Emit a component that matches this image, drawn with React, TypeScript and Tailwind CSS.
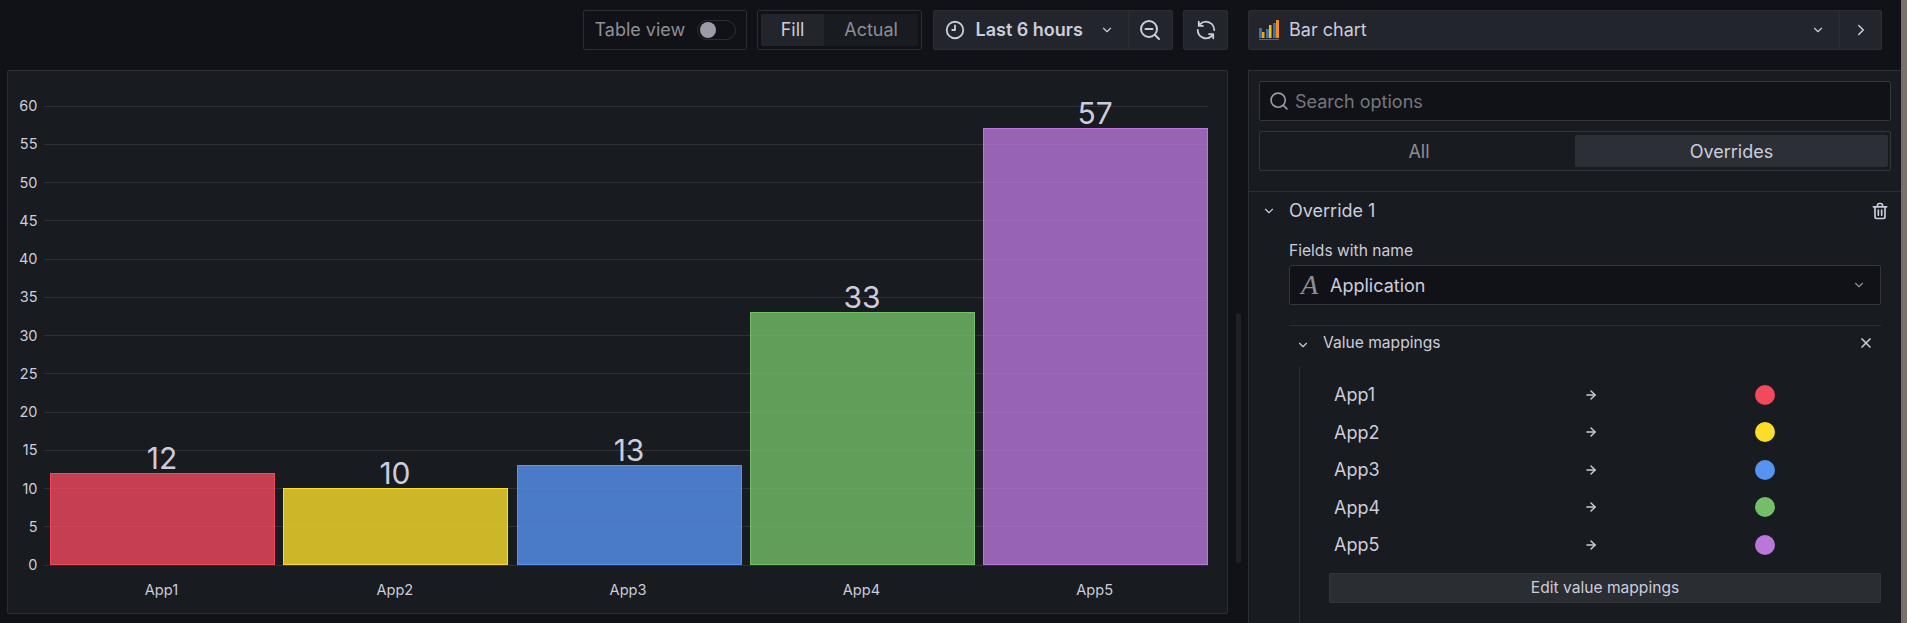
// Bar chart panel editor
import { ArrowRight, ChevronDown, ChevronRight, X } from "lucide-react";

const ticks = [0, 5, 10, 15, 20, 25, 30, 35, 40, 45, 50, 55, 60];

const bars = [
    { name: "App1", value: 12, color: "#f2495c", x: 50.5 },
    { name: "App2", value: 10, color: "#fade2a", x: 283.5 },
    { name: "App3", value: 13, color: "#5794f2", x: 517.5 },
    { name: "App4", value: 33, color: "#73bf69", x: 750.5 },
    { name: "App5", value: 57, color: "#b877d9", x: 983.5 },
];

const yOf = (v: number) => 565 - v * 7.65;

const Chart = () => (
    <svg width="1219" height="542" viewBox="8 71 1219 542" className="block" fontFamily="Inter, sans-serif">
        {ticks.map((t) => (
            <g key={t}>
                <line x1="44" x2="1208" y1={Math.floor(yOf(t)) + 0.5} y2={Math.floor(yOf(t)) + 0.5} stroke="#ccccdc" strokeOpacity="0.12" />
                <text x="37.5" y={yOf(t) + 5} textAnchor="end" fontSize="14.5" fill="#ccccdc">{t}</text>
            </g>
        ))}
        {bars.map((b, i) => {
            const top = Math.floor(yOf(b.value)) + 0.5;
            return (
                <g key={b.name}>
                    <rect x={b.x} y={top} width="224" height={564.5 - top} fill={b.color} fillOpacity="0.8" stroke={b.color} strokeWidth="1" />
                    <text x={b.x + 111.5} y={top - 5} textAnchor="middle" fontSize="30" fill="#ccccdc">{b.value}</text>
                    <text x={161.5 + i * 233.3} y="595" textAnchor="middle" fontSize="14.6" fill="#ccccdc">{b.name}</text>
                </g>
            );
        })}
    </svg>
);

const Toolbar = () => (
    <div className="flex justify-end gap-[10.5px] h-10 mt-[10px] mb-[20px]">
        <div className="flex items-center w-[164px] border border-[#2c2e33] rounded-[2px] pl-[11px] text-[#8d8e96]">
            <span className="pb-[1px]">Table view</span>
            <span className="flex items-center ml-[12px] w-[39px] h-5 rounded-full border border-[#2c2e33] pl-[2px]">
                <span className="w-4 h-4 rounded-full bg-[#9c9ca8]" />
            </span>
        </div>
        <div className="flex items-stretch w-[165px] border border-[#2c2e33] rounded-[2px] p-[3px]">
            <div className="flex w-full bg-[#181b1f] rounded-[2px]">
                <span className="flex items-center justify-center w-[64px] pb-[1px] bg-[#22252b] rounded-[2px] text-[#ccccdc]">Fill</span>
                <span className="flex items-center justify-center w-[95px] pb-[1px] text-[#8d8e96]">Actual</span>
            </div>
        </div>
        <div className="flex items-center w-[240px] bg-[#22252b] border border-[#2c2e33] rounded-[2px]">
            <svg width="22" height="22" viewBox="0 0 24 24" fill="#ccccdc" className="ml-[10px]">
                <path d="M12,2A10,10,0,1,0,22,12,10,10,0,0,0,12,2Zm0,18a8,8,0,1,1,8-8A8,8,0,0,1,12,20Zm0-14a1,1,0,0,0-1,1v4H9a1,1,0,0,0,0,2h3a1,1,0,0,0,1-1V7A1,1,0,0,0,12,6Z" />
            </svg>
            <span className="ml-[10px] pb-[1px] font-semibold text-[#ccccdc]">Last 6 hours</span>
            <ChevronDown size={14} className="ml-[17px] text-[#ccccdc]" />
            <span className="flex items-center justify-center ml-auto w-[44px] h-full border-l border-[#2c2e33]">
                <svg width="24" height="24" viewBox="0 0 24 24" fill="none" stroke="#ccccdc" strokeWidth="2" strokeLinecap="round">
                    <circle cx="11" cy="11" r="8" />
                    <path d="M7.5 11h7M17 17l4 4" />
                </svg>
            </span>
        </div>
        <div className="flex items-center justify-center w-[45px] bg-[#22252b] border border-[#2c2e33] rounded-[2px]">
            <svg width="22" height="22" viewBox="0 0 24 24" fill="#ccccdc">
                <path d="M19.91,15.51H15.38a1,1,0,0,0,0,2h2.4A8,8,0,0,1,4,12a1,1,0,0,0-2,0,10,10,0,0,0,16.88,7.23V21a1,1,0,0,0,2,0V16.5A1,1,0,0,0,19.91,15.51ZM12,2A10,10,0,0,0,5.12,4.77V3a1,1,0,0,0-2,0V7.5a1,1,0,0,0,1,1h4.5a1,1,0,0,0,0-2H6.22A8,8,0,0,1,20,12a1,1,0,0,0,2,0A10,10,0,0,0,12,2Z" />
            </svg>
        </div>
    </div>
);

const BarChartIcon = () => (
    <svg width="20" height="20" viewBox="0 0 20 20" className="shrink-0">
        <rect x="0" y="8" width="3" height="10" fill="#3f6ea8" />
        <rect x="3" y="12" width="2.5" height="6" fill="#f2a900" />
        <rect x="7" y="9" width="3" height="9" fill="#3f6ea8" />
        <rect x="10" y="5" width="2.5" height="13" fill="#f2c400" />
        <rect x="14" y="3" width="3" height="15" fill="#3f6ea8" />
        <rect x="17" y="0" width="3" height="18" fill="#f28c1e" />
        <rect x="0" y="19" width="20" height="1" fill="#3f6ea8" />
    </svg>
);

const Mapping = ({ name, color }: { name: string; color: string }) => (
    <div className="flex items-center h-[37.5px] pl-[34px]">
        <span className="w-[249px] text-[#ccccdc]">{name}</span>
        <ArrowRight size={14} strokeWidth={2.5} className="text-[#ccccdc] mx-[1px]" />
        <span className="ml-[156px] w-5 h-5 rounded-full" style={{ backgroundColor: color }} />
    </div>
);

const Sidebar = () => (
    <div className="flex flex-col flex-1 min-w-0 ml-[20px]">
        <div className="flex items-center w-[634px] h-10 mt-[10px] mb-[20px] bg-[#22252b] border border-[#2c2e33] rounded-[2px] text-[#ccccdc]">
            <span className="ml-[10px]"><BarChartIcon /></span>
            <span className="ml-[10px] flex-1 pb-[1px]">Bar chart</span>
            <ChevronDown size={14} className="mr-[14px]" />
            <span className="flex items-center justify-center w-[42px] h-full border-l border-[#2c2e33]">
                <ChevronRight size={18} />
            </span>
        </div>

        <div className="flex flex-col flex-1 bg-[#181b1f] border-l border-t border-[#2c2e33]">
            <div className="px-[10px] pt-[10px] pb-[20px] border-b border-[#2c2e33]">
                <div className="flex items-center h-10 bg-[#111217] border border-[#33363b] rounded-[2px] pl-[9px] text-[#75767d]">
                    <svg width="20" height="20" viewBox="0 0 24 24" fill="none" stroke="#9a9aa6" strokeWidth="2" strokeLinecap="round">
                        <circle cx="11" cy="11" r="8.5" />
                        <path d="M17.5 17.5l4 4" />
                    </svg>
                    <span className="ml-[6px] pt-[1px]">Search options</span>
                </div>
                <div className="flex h-10 mt-[10px] border border-[#33363b] rounded-[2px] p-[3px] pr-[2px]">
                    <span className="flex items-center justify-center w-[312px] pt-[1px] text-[#8d8e96]">All</span>
                    <span className="flex items-center justify-center flex-1 pt-[1px] bg-[#2c2f35] rounded-[2px] text-[#ccccdc]">Overrides</span>
                </div>
            </div>

            <div className="flex items-center h-[38px] pl-[13px] pr-[11px] text-[#ccccdc]">
                <ChevronDown size={14} />
                <span className="ml-[13px] flex-1 pb-[1px]">Override 1</span>
                <svg width="20" height="20" viewBox="0 0 24 24" fill="#ccccdc">
                    <path d="M10,18a1,1,0,0,0,1-1V11a1,1,0,0,0-2,0v6A1,1,0,0,0,10,18ZM20,6H16V5a3,3,0,0,0-3-3H11A3,3,0,0,0,8,5V6H4A1,1,0,0,0,4,8H5V19a3,3,0,0,0,3,3h8a3,3,0,0,0,3-3V8h1a1,1,0,0,0,0-2ZM10,5a1,1,0,0,1,1-1h2a1,1,0,0,1,1,1V6H10Zm7,14a1,1,0,0,1-1,1H8a1,1,0,0,1-1-1V8H17Zm-3-1a1,1,0,0,0,1-1V11a1,1,0,0,0-2,0v6A1,1,0,0,0,14,18Z" />
                </svg>
            </div>

            <div className="flex flex-col flex-1 pl-[40px] pr-[20px]">
                <div className="mt-[11px] mb-[4px] h-5 leading-5 text-[15.6px] text-[#ccccdc]">Fields with name</div>
                <div className="flex items-center h-10 bg-[#111217] border border-[#33363b] rounded-[2px] text-[#ccccdc]">
                    <span className="ml-[11px] w-[19px] font-['Liberation_Serif',serif] italic text-[28px] leading-none text-[#8d8e96]">A</span>
                    <span className="ml-[10px] flex-1 pt-[1px]">Application</span>
                    <ChevronDown size={14} className="mr-[14px] text-[#8d8e96]" />
                </div>
                <div className="flex items-center h-[35px] mt-[20px] border-t border-[#2c2e33] text-[15.6px] text-[#ccccdc]">
                    <ChevronDown size={14} className="ml-[7px] mt-[4px]" />
                    <span className="ml-[13px] flex-1">Value mappings</span>
                    <X size={16} strokeWidth={2.5} className="mr-[7px]" />
                </div>
                <div className="flex-1 ml-[10px] mt-[6px] pt-[10px] border-l border-[#2c2e33]">
                    {bars.map((b) => (
                        <Mapping key={b.name} name={b.name} color={b.color} />
                    ))}
                    <div className="flex items-center justify-center h-[30px] mt-[9px] ml-[29px] bg-[#2a2d32] border border-[#33363b] rounded-[2px] text-[15.6px] text-[#ccccdc]">
                        Edit value mappings
                    </div>
                </div>
            </div>
        </div>
    </div>
);

export default function App() {
    return (
        <div className="flex w-[1907px] h-[623px] overflow-hidden bg-[#7a7268] font-['Inter',sans-serif] text-[18px]">
            <div className="relative flex w-[1902px] bg-[#111217] border-r border-[#2f7fc1]">
                <div className="flex flex-col w-[1228px] shrink-0 pl-[7px]">
                    <Toolbar />
                    <div className="h-[544px] bg-[#181b1f] border border-[#2c2e33] rounded-[2px] overflow-hidden">
                        <Chart />
                    </div>
                </div>
                <Sidebar />
                {/* pane resize scrollbar */}
                <div className="absolute left-[1236px] top-[313px] w-[5px] h-[250px] rounded-full bg-[#1e2126]" />
            </div>
        </div>
    );
}
